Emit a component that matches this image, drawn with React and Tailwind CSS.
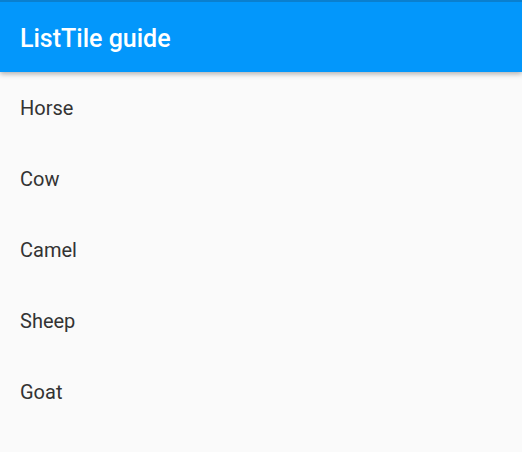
import React from "react";

const animals = ["Horse", "Cow", "Camel", "Sheep", "Goat"];

export default function App() {
  return (
    <div className="w-[522px] h-[452px] overflow-hidden bg-[#fafafa] font-['Roboto',sans-serif]">
      {/* App bar */}
      <div className="relative z-10 h-[72px] bg-[#0397fb] border-t-2 border-[#0a7fcf] shadow-[0_2px_5px_rgba(0,0,0,0.3)] flex items-center px-5 pt-[3px]">
        <h1 className="text-white text-[25px] font-medium">
          ListTile guide
        </h1>
      </div>

      {/* List */}
      <ul>
        {animals.map((name) => (
          <li
            key={name}
            className="h-[71px] flex items-center px-5 text-[20px] text-[#333333]"
          >
            {name}
          </li>
        ))}
      </ul>
    </div>
  );
}
